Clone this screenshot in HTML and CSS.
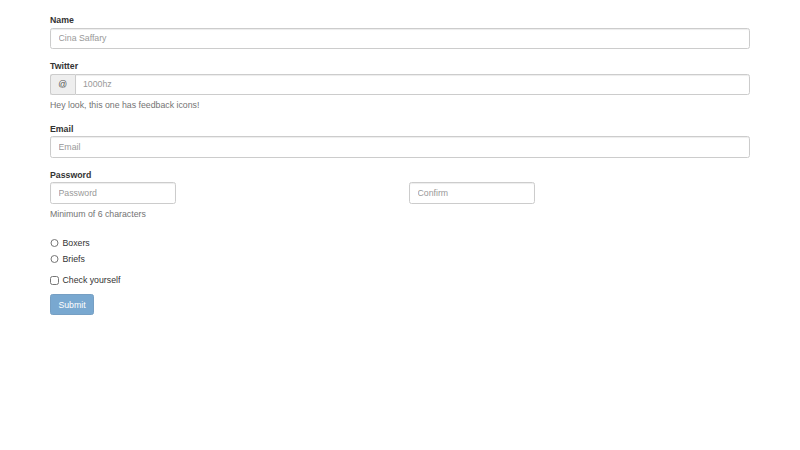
FILE: index.html
```html
<!DOCTYPE html>
<html lang="en">
<head>
  <meta charset="UTF-8">
  <meta name="viewport" content="width=device-width, initial-scale=1.0">
  <title>Form</title>
  <link rel="stylesheet" href="styles.css">
</head>
<body>
  <form class="container">
    <div class="form-group">
      <label class="control-label">Name</label>
      <input class="form-control" type="text" placeholder="Cina Saffary">
    </div>

    <div class="form-group">
      <label class="control-label">Twitter</label>
      <div class="input-group">
        <span class="input-group-addon">@</span>
        <input class="form-control" type="text" placeholder="1000hz">
      </div>
      <div class="help-block">Hey look, this one has feedback icons!</div>
    </div>

    <div class="form-group">
      <label class="control-label">Email</label>
      <input class="form-control" type="email" placeholder="Email">
    </div>

    <div class="form-group">
      <label class="control-label">Password</label>
      <div class="row">
        <div class="col">
          <input class="form-control short" type="password" placeholder="Password">
          <div class="help-block">Minimum of 6 characters</div>
        </div>
        <div class="col">
          <input class="form-control short" type="password" placeholder="Confirm">
        </div>
      </div>
    </div>

    <div class="form-group radios">
      <label class="radio"><input type="radio" name="underwear"> Boxers</label>
      <label class="radio"><input type="radio" name="underwear"> Briefs</label>
    </div>

    <div class="form-group checks">
      <label class="checkbox"><input type="checkbox"> Check yourself</label>
    </div>

    <button class="btn" type="submit" disabled>Submit</button>
  </form>
</body>
</html>
```

FILE: styles.css
```css
* {
  box-sizing: border-box;
}

body {
  margin: 0;
  font-family: "Liberation Sans", Arial, sans-serif;
  font-size: 8.75px;
  line-height: 12.5px;
  color: #333;
  background: #fff;
}

.container {
  padding: 14px 50px;
}

.form-group {
  margin-bottom: 11.4px;
}

.control-label {
  display: block;
  font-weight: bold;
  margin-bottom: 1px;
}

.form-control {
  display: block;
  width: 100%;
  height: 21.25px;
  padding: 4px 7.5px;
  font-family: inherit;
  font-size: 8.75px;
  color: #555;
  background: #fff;
  border: 1px solid #ccc;
  border-radius: 2.5px;
  box-shadow: inset 0 1px 1px rgba(0, 0, 0, 0.075);
}

.form-control::placeholder {
  color: #999;
}

.form-control.short {
  width: 126px;
}

.input-group {
  display: flex;
}

.input-group-addon {
  flex: 0 0 24.5px;
  height: 21.25px;
  line-height: 19.25px;
  text-align: center;
  color: #555;
  background: #eee;
  border: 1px solid #ccc;
  border-right: none;
  border-radius: 2.5px 0 0 2.5px;
}

.input-group .form-control {
  border-radius: 0 2.5px 2.5px 0;
}

.help-block {
  margin-top: 4px;
  color: #737373;
}

.row {
  display: grid;
  grid-template-columns: 1fr 1fr;
  gap: 18px;
}

.radios {
  padding-top: 5px;
  margin-bottom: 9.4px;
}

.radios .radio:first-child {
  margin-top: 0;
}

.checks {
  margin-bottom: 7px;
}

.radio,
.checkbox {
  display: flex;
  align-items: center;
  height: 12.5px;
  margin: 6.25px 0;
  cursor: pointer;
}

.radio + .radio {
  margin-top: -2.8px;
}

.radio input,
.checkbox input {
  width: 8.5px;
  height: 8.5px;
  margin: 0 4px 0 0;
}

.btn {
  display: block;
  width: 44px;
  height: 21.25px;
  padding: 0;
  font-family: inherit;
  font-size: 8.75px;
  color: #fff;
  background: #337ab7;
  border: 1px solid #2e6da4;
  border-radius: 2.5px;
  opacity: 0.65;
}
```
